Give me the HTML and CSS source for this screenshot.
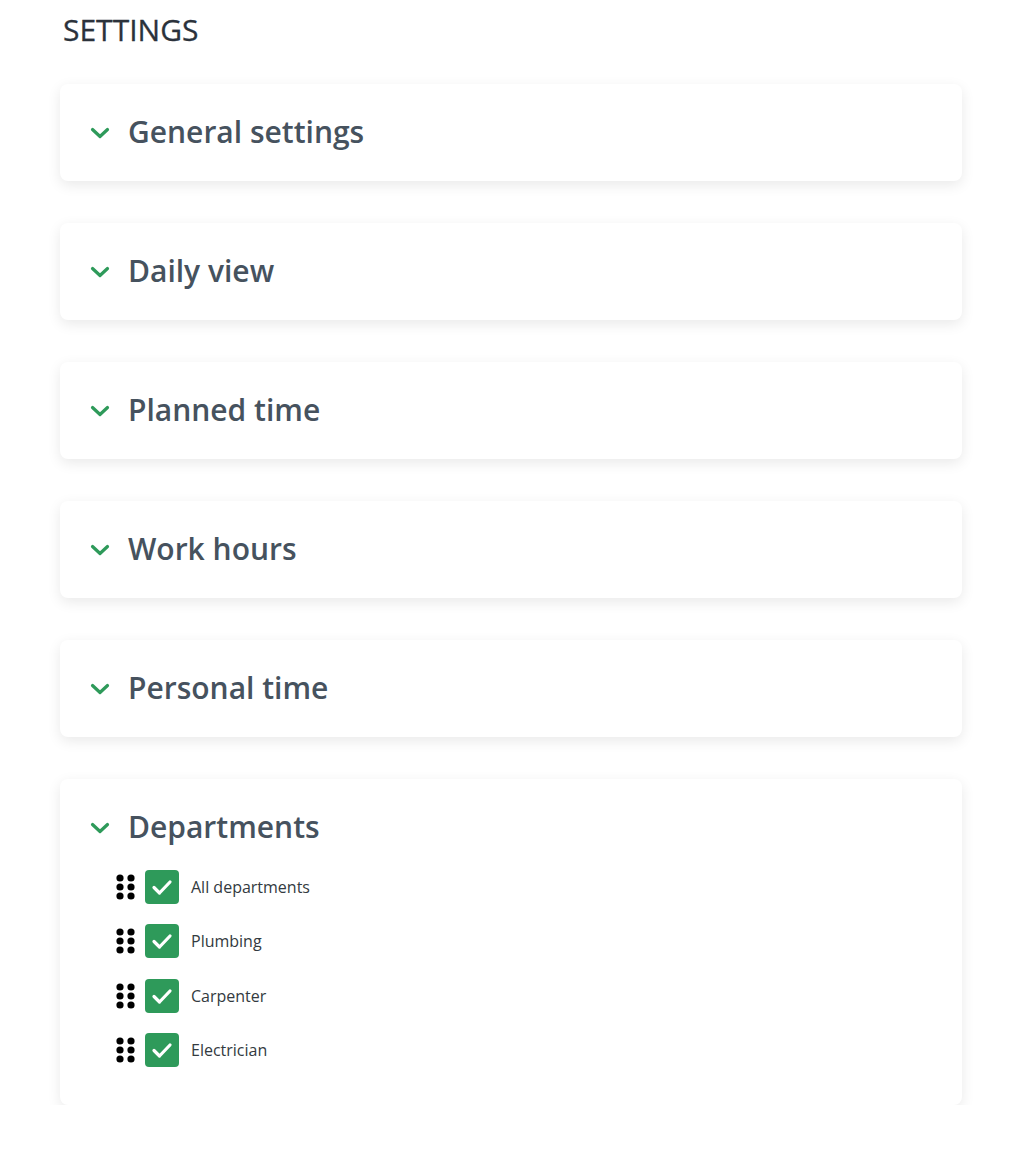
FILE: index.html
```html
<!DOCTYPE html>
<html>
<head>
<meta charset="utf-8">
<link rel="stylesheet" href="styles.css">
</head>
<body>
<main class="page">
  <h1 class="page-title">SETTINGS</h1>
  <section class="card">
    <div class="card-head">
      <svg class="chev" viewBox="0 0 20 12" width="20" height="12"><path d="M2.5 2.5 L10 9.5 L17.5 2.5" fill="none" stroke="#2e9a5a" stroke-width="3.2" stroke-linecap="round" stroke-linejoin="round"/></svg>
      <h2 class="card-title">General settings</h2>
    </div>
  </section>
  <section class="card">
    <div class="card-head">
      <svg class="chev" viewBox="0 0 20 12" width="20" height="12"><path d="M2.5 2.5 L10 9.5 L17.5 2.5" fill="none" stroke="#2e9a5a" stroke-width="3.2" stroke-linecap="round" stroke-linejoin="round"/></svg>
      <h2 class="card-title">Daily view</h2>
    </div>
  </section>
  <section class="card">
    <div class="card-head">
      <svg class="chev" viewBox="0 0 20 12" width="20" height="12"><path d="M2.5 2.5 L10 9.5 L17.5 2.5" fill="none" stroke="#2e9a5a" stroke-width="3.2" stroke-linecap="round" stroke-linejoin="round"/></svg>
      <h2 class="card-title">Planned time</h2>
    </div>
  </section>
  <section class="card">
    <div class="card-head">
      <svg class="chev" viewBox="0 0 20 12" width="20" height="12"><path d="M2.5 2.5 L10 9.5 L17.5 2.5" fill="none" stroke="#2e9a5a" stroke-width="3.2" stroke-linecap="round" stroke-linejoin="round"/></svg>
      <h2 class="card-title">Work hours</h2>
    </div>
  </section>
  <section class="card">
    <div class="card-head">
      <svg class="chev" viewBox="0 0 20 12" width="20" height="12"><path d="M2.5 2.5 L10 9.5 L17.5 2.5" fill="none" stroke="#2e9a5a" stroke-width="3.2" stroke-linecap="round" stroke-linejoin="round"/></svg>
      <h2 class="card-title">Personal time</h2>
    </div>
  </section>
  <section class="card">
    <div class="card-head">
      <svg class="chev" viewBox="0 0 20 12" width="20" height="12"><path d="M2.5 2.5 L10 9.5 L17.5 2.5" fill="none" stroke="#2e9a5a" stroke-width="3.2" stroke-linecap="round" stroke-linejoin="round"/></svg>
      <h2 class="card-title">Departments</h2>
    </div>
    <ul class="dept-list">
      <li class="dept">
        <svg class="handle" viewBox="0 0 19 26" width="19" height="26"><circle cx="4" cy="4" r="3.6"/><circle cx="15" cy="4" r="3.6"/><circle cx="4" cy="13" r="3.6"/><circle cx="15" cy="13" r="3.6"/><circle cx="4" cy="22" r="3.6"/><circle cx="15" cy="22" r="3.6"/></svg>
        <span class="check"><svg viewBox="0 0 34 34" width="34" height="34"><path d="M9 17.5 L14.5 23 L25 12" fill="none" stroke="#fff" stroke-width="3.2" stroke-linecap="round" stroke-linejoin="round"/></svg></span>
        <span class="dept-name">All departments</span>
      </li>
      <li class="dept">
        <svg class="handle" viewBox="0 0 19 26" width="19" height="26"><circle cx="4" cy="4" r="3.6"/><circle cx="15" cy="4" r="3.6"/><circle cx="4" cy="13" r="3.6"/><circle cx="15" cy="13" r="3.6"/><circle cx="4" cy="22" r="3.6"/><circle cx="15" cy="22" r="3.6"/></svg>
        <span class="check"><svg viewBox="0 0 34 34" width="34" height="34"><path d="M9 17.5 L14.5 23 L25 12" fill="none" stroke="#fff" stroke-width="3.2" stroke-linecap="round" stroke-linejoin="round"/></svg></span>
        <span class="dept-name">Plumbing</span>
      </li>
      <li class="dept">
        <svg class="handle" viewBox="0 0 19 26" width="19" height="26"><circle cx="4" cy="4" r="3.6"/><circle cx="15" cy="4" r="3.6"/><circle cx="4" cy="13" r="3.6"/><circle cx="15" cy="13" r="3.6"/><circle cx="4" cy="22" r="3.6"/><circle cx="15" cy="22" r="3.6"/></svg>
        <span class="check"><svg viewBox="0 0 34 34" width="34" height="34"><path d="M9 17.5 L14.5 23 L25 12" fill="none" stroke="#fff" stroke-width="3.2" stroke-linecap="round" stroke-linejoin="round"/></svg></span>
        <span class="dept-name">Carpenter</span>
      </li>
      <li class="dept">
        <svg class="handle" viewBox="0 0 19 26" width="19" height="26"><circle cx="4" cy="4" r="3.6"/><circle cx="15" cy="4" r="3.6"/><circle cx="4" cy="13" r="3.6"/><circle cx="15" cy="13" r="3.6"/><circle cx="4" cy="22" r="3.6"/><circle cx="15" cy="22" r="3.6"/></svg>
        <span class="check"><svg viewBox="0 0 34 34" width="34" height="34"><path d="M9 17.5 L14.5 23 L25 12" fill="none" stroke="#fff" stroke-width="3.2" stroke-linecap="round" stroke-linejoin="round"/></svg></span>
        <span class="dept-name">Electrician</span>
      </li>
    </ul>
  </section>
</main>
</body>
</html>
```

FILE: styles.css
```css
* { box-sizing: border-box; }
html, body { margin: 0; padding: 0; background: #fff; }
body { font-family: "Open Sans", "Noto Sans", sans-serif; }

.page {
  width: 902px;
  margin-left: 60px;
  padding-top: 10px;
  display: flex;
  flex-direction: column;
  gap: 42px;
}

.page-title {
  margin: 0 0 -8px 3px;
  font-size: 30px;
  font-weight: 400;
  line-height: 40px;
  color: #2b323b;
  -webkit-text-stroke: 0.3px #2b323b;
}

.card {
  background: #fff;
  border-radius: 8px;
  box-shadow: 0 4px 14px rgba(0, 0, 0, 0.09);
  padding: 28px 32px 29px 30px;
}

.card-head {
  display: flex;
  align-items: center;
  gap: 18px;
}

.chev { flex: none; margin-top: 2px; }

.card-title {
  margin: 0;
  font-size: 30px;
  font-weight: 600;
  line-height: 40px;
  color: #46525e;
}

.dept-list {
  list-style: none;
  margin: 23px 0 9px;
  padding: 0 0 0 26px;
  display: flex;
  flex-direction: column;
  gap: 20.4px;
}

.dept {
  display: flex;
  align-items: center;
  height: 34px;
}

.handle { flex: none; fill: #000; margin-right: 10px; }

.check {
  flex: none;
  width: 34px;
  height: 34px;
  border-radius: 4px;
  background: #2e9a5a;
  display: flex;
  margin-right: 12px;
}

.dept-name {
  font-size: 16px;
  color: #333a40;
}
```
